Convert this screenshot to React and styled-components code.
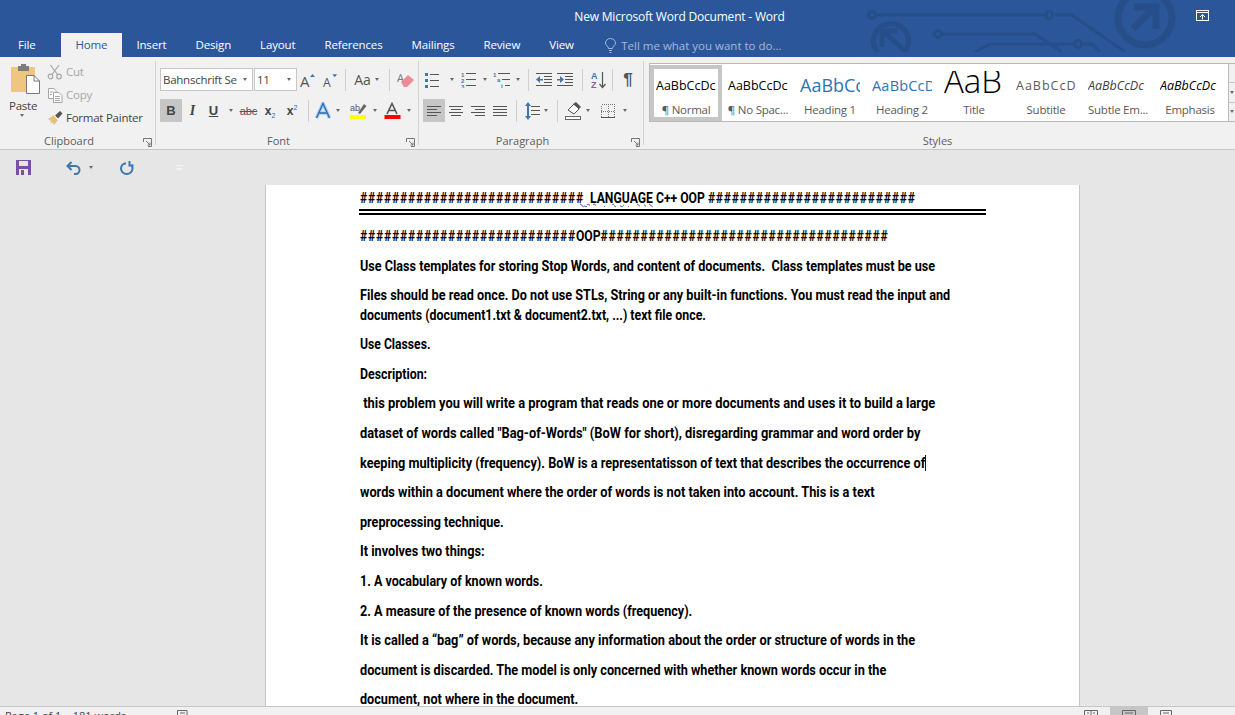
import React from "react";
import styled, { createGlobalStyle } from "styled-components";

const GlobalStyle = createGlobalStyle`
  html, body { margin: 0; padding: 0; height: 100%; overflow: hidden; }
  body { font-family: "Open Sans", "Liberation Sans", sans-serif; }
`;

const Window = styled.div`
  width: 1235px;
  height: 715px;
  display: flex;
  flex-direction: column;
  overflow: hidden;
  background: #e6e6e6;
`;

const Header = styled.header`
  position: relative;
  height: 57px;
  flex: none;
  background: #2b579a;
  overflow: hidden;
`;

const Circuit = styled.svg`
  position: absolute;
  left: 0;
  top: 0;
`;

const Title = styled.div`
  height: 33px;
  line-height: 33px;
  text-align: center;
  padding-left: 124px;
  font-size: 12px;
  letter-spacing: -0.2px;
  color: #fff;
  position: relative;
`;

const RestoreBtn = styled.svg`
  position: absolute;
  left: 1196px;
  top: 10px;
`;

const Tabs = styled.nav`
  display: flex;
  height: 24px;
  position: relative;
`;

const Tab = styled.div`
  padding: 0 14.5px;
  line-height: 24px;
  font-size: 11.5px;
  letter-spacing: -0.15px;
  color: ${(p) => (p.$active ? "#2b579a" : "#fff")};
  background: ${(p) => (p.$active ? "#f1f1f1" : "transparent")};
`;

const FileTab = styled(Tab)`
  padding: 0 25px 0 18px;
  width: 18px;
`;

const TellMe = styled.div`
  display: flex;
  align-items: center;
  gap: 5px;
  margin-left: 17px;
  font-size: 11.5px;
  color: #a5b9d6;
`;

const Ribbon = styled.section`
  height: 92px;
  flex: none;
  display: flex;
  background: #f1f1f1;
  border-bottom: 1px solid #c6c6c6;
`;

const Group = styled.div`
  position: relative;
  width: ${(p) => p.$w}px;
  flex: none;
  display: flex;
  flex-direction: column;
  box-sizing: border-box;
`;

const GroupBody = styled.div`
  height: 76px;
  display: flex;
  flex-direction: column;
  padding-left: ${(p) => p.$pl || 0}px;
`;

const GroupLabel = styled.div`
  height: 16px;
  line-height: 16px;
  padding-right: ${(p) => p.$pr ?? 17}px;
  text-align: center;
  font-size: 11px;
  color: #5c5c5c;
`;

const GroupRule = styled.div`
  width: 1px;
  flex: none;
  height: 84px;
  margin-top: 4px;
  background: #d2d2d2;
`;

const Launcher = styled.svg`
  position: absolute;
  right: ${(p) => p.$r || 3}px;
  bottom: 2px;
`;

const ClipRow = styled.div`
  display: flex;
`;

const PasteBtn = styled.div`
  width: 47px;
  padding: 7px 0 0 11px;
  box-sizing: border-box;
  display: flex;
  flex-direction: column;
  align-items: flex-start;
`;

const PasteLabel = styled.div`
  font-size: 11.5px;
  letter-spacing: -0.25px;
  line-height: 16px;
  margin: 4px 0 0 -2px;
  color: #444;
`;

const ClipList = styled.div`
  display: flex;
  flex-direction: column;
  padding-top: 3px;
`;

const ClipItem = styled.div`
  height: 23px;
  display: flex;
  align-items: center;
  gap: 3px;
  font-size: 11.5px;
  letter-spacing: -0.25px;
  white-space: nowrap;
  color: ${(p) => (p.$off ? "#a6a6a6" : "#444")};
`;

const ToolRow = styled.div`
  display: flex;
  align-items: center;
  height: ${(p) => p.$h || 23}px;
  margin-top: ${(p) => p.$mt || 0}px;
`;

const FontSelect = styled.div`
  width: ${(p) => p.$w}px;
  height: 23px;
  flex: none;
  box-sizing: border-box;
  background: #fff;
  border: 1px solid #c6c6c6;
  margin-right: 1px;
  padding: 0 5px 0 2px;
  display: flex;
  align-items: center;
  justify-content: space-between;
  font-size: 11.5px;
  letter-spacing: -0.25px;
  color: #444;
  white-space: nowrap;
`;

const Tool = styled.div`
  width: ${(p) => p.$w || 22}px;
  height: 23px;
  flex: none;
  display: flex;
  align-items: center;
  justify-content: center;
  gap: ${(p) => p.$gap || 0}px;
  font-size: ${(p) => p.$fs || 12}px;
  color: #555;
  margin-right: ${(p) => p.$mr || 0}px;
  background: ${(p) => (p.$on ? "#c6c6c6" : "transparent")};
`;

const BoldGlyph = styled.span`
  font-family: "Liberation Sans", sans-serif;
  font-weight: 700;
  font-size: 13px;
  color: #444;
`;

const ItalicGlyph = styled(BoldGlyph)`
  font-family: "Liberation Serif", serif;
  font-style: italic;
  font-size: 14px;
`;

const UnderGlyph = styled(BoldGlyph)`
  text-decoration: underline;
`;

const PilcrowGlyph = styled(BoldGlyph)`
  font-size: 17px;
  color: #555;
`;

const StrikeGlyph = styled.span`
  font-family: "Liberation Sans", sans-serif;
  font-size: 11px;
  color: #555;
  text-decoration: line-through;
`;

const ScriptGlyph = styled.span`
  font-family: "Liberation Sans", sans-serif;
  font-weight: 700;
  font-size: 12px;
  color: #444;
  sub, sup { font-size: 7px; color: #2b6cb0; font-weight: 400; line-height: 0; }
`;

const Sep = styled.div`
  width: 1px;
  height: 22px;
  flex: none;
  background: #cfcfcf;
  margin: 0 ${(p) => p.$m || 7}px;
`;

const Caret = styled.i`
  display: block;
  width: 0;
  height: 0;
  flex: none;
  border-left: 2.5px solid transparent;
  border-right: 2.5px solid transparent;
  border-top: 3px solid #6a6a6a;
  margin-left: ${(p) => p.$ml || 0}px;
  margin-right: ${(p) => p.$mr || 0}px;
`;

const Gallery = styled.div`
  margin: 6px 0 0 5px;
  width: 579px;
  height: 59px;
  box-sizing: border-box;
  background: #fff;
  border: 1px solid #b9b9b9;
  border-right: 0;
  padding-top: 1px;
  display: flex;
`;

const StyleCard = styled.div`
  width: 72px;
  height: 56px;
  flex: none;
  box-sizing: border-box;
  border: 4px solid ${(p) => (p.$on ? "#c6c6c6" : "transparent")};
  display: flex;
  flex-direction: column;
  align-items: center;
`;

const StylePreview = styled.div`
  height: 29px;
  width: 60px;
  margin-top: 2px;
  flex: none;
  overflow: hidden;
  white-space: nowrap;
  line-height: 29px;
  font-family: "Open Sans", sans-serif;
  font-size: ${(p) => p.$fs || 12.5}px;
  font-style: ${(p) => (p.$it ? "italic" : "normal")};
  letter-spacing: ${(p) => p.$ls || 0}px;
  color: ${(p) => p.$c || "#000"};
`;

const TitlePreview = styled(StylePreview)`
  font-weight: 300;
  line-height: 19px;
`;

const StyleName = styled.div`
  font-size: 11.5px;
  letter-spacing: -0.25px;
  line-height: 16px;
  margin-top: 2px;
  white-space: nowrap;
  color: #5a5a5a;
`;

const Spinner = styled.div`
  width: 7px;
  height: 59px;
  margin-top: 6px;
  flex: none;
  display: flex;
  flex-direction: column;
  border-top: 1px solid #b9b9b9;
  border-bottom: 1px solid #b9b9b9;
  box-sizing: border-box;
`;

const SpinCell = styled.div`
  flex: 1;
  border-left: 1px solid #b9b9b9;
  border-bottom: 1px solid #c6c6c6;
  display: flex;
  align-items: center;
  justify-content: center;
  &:last-child { border-bottom: 0; }
`;

const QuickBar = styled.div`
  height: 35px;
  flex: none;
  display: flex;
  align-items: center;
  padding: 0 0 0 16px;
  box-sizing: border-box;
  background: #e6e6e6;
`;

const QuickIcon = styled.span`
  display: flex;
  flex: none;
  margin-left: ${(p) => p.$ml || 0}px;
`;

const Workspace = styled.main`
  flex: 1;
  min-height: 0;
  display: flex;
  padding-left: 265px;
  overflow: hidden;
`;

const Page = styled.article`
  width: 815px;
  flex: none;
  box-sizing: border-box;
  background: #fff;
  border-left: 1px solid #c6c6c6;
  border-right: 1px solid #c6c6c6;
  padding: 3.5px 93px 0 94px;
  font-family: "Roboto", "Liberation Sans", sans-serif;
  font-weight: 700;
  font-size: 14px;
  color: #000;
`;

const Para = styled.p`
  margin: 0 0 ${(p) => p.$mb ?? 10.2}px;
  line-height: 19.4px;
  white-space: pre;
  transform-origin: left center;
  transform: scaleX(${(p) => p.$sx || 0.87});
  width: max-content;
`;

const HashRun = styled.span`
  letter-spacing: 0.9px;
`;

const Rule = styled.div`
  width: 627px;
  height: 6px;
  margin: -9.5px 0 12.4px -1px;
  box-sizing: border-box;
  border-top: 2px solid #000;
  border-bottom: 2px solid #000;
`;

const Misspelt = styled.span`
  text-decoration: underline wavy #4e4ea8 1px;
  text-underline-offset: 0;
`;

const Cursor = styled.span`
  display: inline-block;
  width: 1px;
  height: 16px;
  background: #000;
  vertical-align: -3px;
`;

const StatusBar = styled.footer`
  height: 9px;
  flex: none;
  box-sizing: border-box;
  display: flex;
  background: #f1f1f1;
  border-top: 1px solid #c6c6c6;
  overflow: hidden;
`;

const StatusText = styled.div`
  width: 177px;
  flex: none;
  box-sizing: border-box;
  padding: 1px 0 0 5px;
  font-size: 11px;
  line-height: 15px;
  color: #444;
  white-space: pre;
`;

const StatusIcon = styled.svg`
  flex: none;
  display: block;
  margin-top: 3px;
`;

const ViewGroup = styled.div`
  margin-left: auto;
  padding-right: 63px;
  display: flex;
`;

const ViewBtn = styled.div`
  width: ${(p) => p.$w}px;
  flex: none;
  margin-left: ${(p) => p.$ml || 0}px;
  padding-left: ${(p) => p.$pl || 0}px;
  box-sizing: border-box;
  background: ${(p) => (p.$on ? "#c6c6c6" : "transparent")};
`;

const lines = (color, rows) =>
  rows.map(([x1, y, x2], i) => <line key={i} x1={x1} y1={y} x2={x2} y2={y} stroke={color} />);

const Lines = ({ rows, w = 16, h = 16, color = "#555", children }) => (
  <svg width={w} height={h} viewBox={`0 0 ${w} ${h}`} shapeRendering="crispEdges">
    {lines(color, rows)}
    {children}
  </svg>
);

const DialogMark = ({ r }) => (
  <Launcher $r={r} width="9" height="9" viewBox="0 0 9 9" fill="none" stroke="#777">
    <path d="M.5 4V.5H8.5V8.5H5" />
    <path d="M3 3 7 7M7 4.5V7H4.5" />
  </Launcher>
);

const Circuitry = () => (
  <Circuit width="1235" height="52" viewBox="0 0 1235 52" fill="none" stroke="#264e89" strokeWidth="3">
    <circle cx="872" cy="15" r="3.5" />
    <path d="M876 15H1048M1055 15H1072L1125 52" />
    <circle cx="1049" cy="15" r="3.5" />
    <circle cx="938" cy="34" r="3.5" />
    <path d="M942 34H1035L1062 52" />
    <path d="M975 52 990 44H1075M1083 44H1092L1100 52" />
    <circle cx="1078" cy="44" r="3.5" />
    <circle cx="1145" cy="18" r="27" strokeWidth="7" />
    <path d="M1133 29 1152 10M1134 7H1156V29" strokeWidth="7" />
    <circle cx="891" cy="41" r="17.5" strokeWidth="5" />
    <path d="M904 50 885 33M882 47V31H898" strokeWidth="5" />
  </Circuit>
);

const PasteIcon = () => (
  <svg width="29" height="30" viewBox="0 0 29 30">
    <rect x="0" y="3" width="24" height="25" rx="1" fill="#efc67f" />
    <rect x="7" y="2" width="11" height="5" fill="#7c7c7c" />
    <rect x="10" y="0" width="5" height="3" fill="#7c7c7c" />
    <path d="M15.5 11.500H23L28.500 17V29.500H15.500Z" fill="#fff" stroke="#777" />
    <path d="M23 11.500V17H28.500" fill="none" stroke="#777" />
  </svg>
);

const ScissorsIcon = () => (
  <svg width="16" height="16" viewBox="0 0 16 16" fill="none" stroke="#a6a6a6" strokeWidth="1.200">
    <circle cx="3.500" cy="12.500" r="2.300" />
    <circle cx="12" cy="12.500" r="2.300" />
    <path d="M5 10.500 12 1M10.500 10.500 3.500 1" />
  </svg>
);

const CopyIcon = () => (
  <svg width="16" height="16" viewBox="0 0 16 16" fill="#fff" stroke="#a6a6a6">
    <path d="M1.500 1.500H7L9 3.500V11.500H1.500Z" />
    <path d="M6.500 5.500H12L15 8.500V15.500H6.500Z" />
    <path d="M3 5H6M3 7.500H5M8 9.500H13M8 11.500H13M8 13.500H13" fill="none" />
  </svg>
);

const PainterIcon = () => (
  <svg width="16" height="16" viewBox="0 0 16 16">
    <path d="M1 9 7 5 11 10 7 15 5 12 3 14 4 11Z" fill="#e9bf78" />
    <path d="M8 5.500 13 1 15.500 3.500 11 8.500Z" fill="#555" />
    <path d="M7 5 11 10" stroke="#fff" />
  </svg>
);

const GrowIcon = ({ small }) => (
  <svg width="18" height="18" viewBox="0 0 18 18">
    <text x="1" y="16" fontFamily="Open Sans" fontSize={small ? 13 : 15} fill="#555">A</text>
    <path d={small ? "M11 3H16L13.500 6Z" : "M11 6H16L13.500 3Z"} fill="#3e76ae" />
  </svg>
);

const EraserIcon = () => (
  <svg width="18" height="18" viewBox="0 0 18 18">
    <text x="0" y="11" fontFamily="Open Sans" fontSize="11" fill="#777">A</text>
    <path d="M4 11 11 4 17 9 10 16H7Z" fill="#ef8a96" />
  </svg>
);

const EffectIcon = () => (
  <svg width="16" height="18" viewBox="0 0 16 18">
    <path d="M1.500 16 8 1.500 14.500 16M4.500 11H11.500" fill="none" stroke="#a8c8e8" strokeWidth="3.500" />
    <path d="M1.500 16 8 1.500 14.500 16M4.500 11H11.500" fill="none" stroke="#2c6bb0" strokeWidth="1.300" />
  </svg>
);

const HighlightIcon = () => (
  <svg width="17" height="18" viewBox="0 0 17 18">
    <text x="0" y="9" fontFamily="Liberation Sans" fontSize="9" fill="#555">ab</text>
    <path d="M8 11 14 2 16.500 4 10 12Z" fill="#666" />
    <rect x="0" y="13" width="16" height="4" fill="#ffff00" />
  </svg>
);

const ColorIcon = () => (
  <svg width="17" height="18" viewBox="0 0 17 18">
    <path d="M3 12 8 1.500 13 12M5 8.500H11" fill="none" stroke="#555" strokeWidth="1.600" />
    <rect x="0.500" y="13" width="16" height="4" fill="#f00" />
  </svg>
);

const BulletIcon = () => (
  <svg width="15" height="16" viewBox="0 0 15 16" shapeRendering="crispEdges">
    <rect x="0" y="1" width="3" height="3" fill="#3e76ae" />
    <rect x="0" y="7" width="3" height="3" fill="#3e76ae" />
    <rect x="0" y="13" width="3" height="3" fill="#3e76ae" />
    {lines("#555", [[5, 2.500, 14], [5, 8.500, 14], [5, 14.500, 14]])}
  </svg>
);

const NumberIcon = () => (
  <svg width="15" height="17" viewBox="0 0 15 17">
    {["1", "2", "3"].map((n, i) => (
      <text key={n} x="0" y={5.500 + i * 6} fontFamily="Liberation Sans" fontWeight="700" fontSize="6" fill="#3e76ae">{n}</text>
    ))}
    {lines("#555", [[5, 2.500, 15], [5, 8.500, 15], [5, 14.500, 15]])}
  </svg>
);

const MultiIcon = () => (
  <svg width="17" height="17" viewBox="0 0 17 17">
    <text x="0" y="5.500" fontFamily="Liberation Sans" fontWeight="700" fontSize="6" fill="#3e76ae">1</text>
    <text x="4" y="11" fontFamily="Liberation Sans" fontWeight="700" fontSize="6" fill="#3e76ae">a</text>
    <text x="8" y="16.500" fontFamily="Liberation Sans" fontWeight="700" fontSize="6" fill="#3e76ae">i</text>
    {lines("#555", [[5, 2.500, 17], [9, 8.500, 17], [12, 14.500, 17]])}
  </svg>
);

const IndentIcon = ({ flip }) => (
  <svg width="16" height="14" viewBox="0 0 16 14" shapeRendering="crispEdges">
    {lines("#555", [[0, .5, 16], [8, 3.500, 16], [8, 6.500, 16], [8, 9.500, 16], [0, 12.500, 16]])}
    <path d={flip ? "M0 6H3V3L7 6.500 3 10V7.500H0Z" : "M7 6H4V3L0 6.500 4 10V7.500H7Z"} fill="#3e76ae" shapeRendering="auto" />
  </svg>
);

const SortIcon = () => (
  <svg width="15" height="18" viewBox="0 0 15 18">
    <text x="0" y="8" fontFamily="Liberation Sans" fontSize="9" fontWeight="700" fill="#3e76ae">A</text>
    <text x="0" y="17" fontFamily="Liberation Sans" fontSize="9" fontWeight="700" fill="#8a5ca8">Z</text>
    <path d="M11.500 1V16M8.500 13 11.500 16.500 14.500 13" fill="none" stroke="#555" strokeWidth="1.200" />
  </svg>
);

const LineSpacingIcon = () => (
  <svg width="15" height="18" viewBox="0 0 15 18" shapeRendering="crispEdges">
    {lines("#555", [[6, 4.500, 15], [6, 8.500, 15], [6, 12.500, 15]])}
    <path d="M3 0 6 4H4V14H6L3 18 0 14H2V4H0Z" fill="#3e76ae" shapeRendering="auto" />
  </svg>
);

const ShadingIcon = () => (
  <svg width="18" height="18" viewBox="0 0 18 18">
    <path d="M3 8 9 2 14 7 9 12Z" fill="#fff" stroke="#555" />
    <path d="M8 2 11 0 16 5 14 7Z" fill="#555" />
    <rect x=".5" y="14.500" width="15" height="3" fill="#fff" stroke="#666" />
  </svg>
);

const BorderIcon = () => (
  <svg width="14" height="14" viewBox="0 0 14 14" fill="none" stroke="#777" strokeDasharray="1 1" shapeRendering="crispEdges">
    <rect x=".5" y=".5" width="13" height="13" />
    <path d="M7 0V14M0 7H14" />
    <path d="M0 13.500H14" stroke="#555" strokeDasharray="none" />
  </svg>
);

const SaveIcon = () => (
  <svg width="15" height="15" viewBox="0 0 15 15" shapeRendering="crispEdges">
    <rect width="15" height="15" fill="#7a4fa3" />
    <rect x="3" y="1" width="9" height="5" fill="#e6e6e6" />
    <rect x="3" y="9" width="9" height="6" fill="#e6e6e6" />
    <rect x="5" y="10" width="3" height="5" fill="#7a4fa3" />
  </svg>
);

const UndoIcon = () => (
  <svg width="15" height="14" viewBox="0 0 15 14" fill="none" stroke="#3e76ae" strokeWidth="2">
    <path d="M5.500 1 1.500 5 5.500 9" />
    <path d="M2 5H9.500C12 5 13.500 7 13.500 9S12 13 9.500 13H8" />
  </svg>
);

const RedoIcon = () => (
  <svg width="14" height="14" viewBox="0 0 14 14" fill="none" stroke="#3e76ae" strokeWidth="2">
    <path d="M6 2.200C3 2.500 1 4.800 1 7.500 1 10.500 3.500 13 6.800 13 10 13 12.500 10.500 12.500 7.500 12.500 6 12 5 11.500 4" />
    <path d="M9.500 0V4.500H13.500" />
  </svg>
);

const CustomizeIcon = () => (
  <svg width="7" height="6" viewBox="0 0 7 6" fill="#f4f4f4">
    <rect width="7" height="1" />
    <path d="M0 3H7L3.500 6Z" />
  </svg>
);

const styleCards = [
  { name: "¶ Normal", on: true },
  { name: "¶ No Spac..." },
  { name: "Heading 1", fs: 18, c: "#2e74b5" },
  { name: "Heading 2", fs: 14.5, c: "#2e74b5", ls: 0.2 },
  { name: "Title", title: true },
  { name: "Subtitle", c: "#5a5a5a", ls: 1 },
  { name: "Subtle Em...", it: true, c: "#404040" },
  { name: "Emphasis", it: true },
];

const pageLines = [
  { text: " this problem you will write a program that reads one or more documents and uses it to build a large", sx: 0.921 },
  { text: 'dataset of words called "Bag-of-Words" (BoW for short), disregarding grammar and word order by', sx: 0.917 },
  { text: "keeping multiplicity (frequency). BoW is a representatisson of text that describes the occurrence of", sx: 0.907, caret: true },
  { text: "words within a document where the order of words is not taken into account. This is a text", sx: 0.913 },
  { text: "preprocessing technique.", sx: 0.9 },
  { text: "It involves two things:", sx: 0.907 },
  { text: "1. A vocabulary of known words.", sx: 0.895 },
  { text: "2. A measure of the presence of known words (frequency).", sx: 0.903 },
  { text: "It is called a “bag” of words, because any information about the order or structure of words in the", sx: 0.913 },
  { text: "document is discarded. The model is only concerned with whether known words occur in the", sx: 0.908 },
  { text: "document, not where in the document.", sx: 0.903 },
];

export default function App() {
  return (
    <>
      <GlobalStyle />
      <Window>
        <Header>
          <Circuitry />
          <Title>New Microsoft Word Document - Word</Title>
          <RestoreBtn width="13" height="11" viewBox="0 0 13 11" fill="none" stroke="#fff">
            <rect x=".5" y=".5" width="12" height="10" />
            <path d="M0 2.500H13" />
            <path d="M6.500 9.500V5M4 7 6.500 4.500 9 7" />
          </RestoreBtn>
          <Tabs>
            <FileTab>File</FileTab>
            <Tab $active>Home</Tab>
            {["Insert", "Design", "Layout", "References", "Mailings", "Review", "View"].map((t) => (
              <Tab key={t}>{t}</Tab>
            ))}
            <TellMe>
              <svg width="11" height="15" viewBox="0 0 11 15" fill="none" stroke="#a5b9d6">
                <path d="M3.500 10.500C3.500 8 .5 7.500 .5 5A5 4.500 0 0 1 10.500 5C10.500 7.500 7.500 8 7.500 10.500Z" />
                <path d="M4 12.500H7M4.500 14.500H6.500" />
              </svg>
              Tell me what you want to do...
            </TellMe>
          </Tabs>
        </Header>

        <Ribbon>
          <Group $w={155}>
            <GroupBody>
              <ClipRow>
                <PasteBtn>
                  <PasteIcon />
                  <PasteLabel>Paste</PasteLabel>
                  <Caret $ml={9} />
                </PasteBtn>
                <ClipList>
                  <ClipItem $off><ScissorsIcon />Cut</ClipItem>
                  <ClipItem $off><CopyIcon />Copy</ClipItem>
                  <ClipItem><PainterIcon />Format Painter</ClipItem>
                </ClipList>
              </ClipRow>
            </GroupBody>
            <GroupLabel>Clipboard</GroupLabel>
            <DialogMark />
          </Group>
          <GroupRule />
          <Group $w={262}>
            <GroupBody $pl={4}>
              <ToolRow $mt={11}>
                <FontSelect $w={93}>Bahnschrift Se<Caret /></FontSelect>
                <FontSelect $w={43}>11<Caret /></FontSelect>
                <Tool $w={19} $mr={5}><GrowIcon /></Tool>
                <Tool $w={17}><GrowIcon small /></Tool>
                <Sep $m={6} />
                <Tool $w={29} $mr={2} $fs={14} $gap={4}>Aa<Caret /></Tool>
                <Sep $m={6} />
                <Tool $w={20}><EraserIcon /></Tool>
              </ToolRow>
              <ToolRow $mt={8}>
                <Tool $on><BoldGlyph>B</BoldGlyph></Tool>
                <Tool $w={21}><ItalicGlyph>I</ItalicGlyph></Tool>
                <Tool $w={21}><UnderGlyph>U</UnderGlyph></Tool>
                <Tool $w={14}><Caret /></Tool>
                <Tool $w={21}><StrikeGlyph>abc</StrikeGlyph></Tool>
                <Tool $w={22}><ScriptGlyph>x<sub>2</sub></ScriptGlyph></Tool>
                <Tool $w={22}><ScriptGlyph>x<sup>2</sup></ScriptGlyph></Tool>
                <Sep $m={5} />
                <Tool $w={27} $gap={5} $mr={8}><EffectIcon /><Caret /></Tool>
                <Tool $w={28} $gap={6} $mr={6}><HighlightIcon /><Caret /></Tool>
                <Tool $w={28} $gap={6}><ColorIcon /><Caret /></Tool>
              </ToolRow>
            </GroupBody>
            <GroupLabel>Font</GroupLabel>
            <DialogMark />
          </Group>
          <GroupRule />
          <Group $w={224}>
            <GroupBody $pl={4}>
              <ToolRow $mt={11}>
                <Tool $w={19} $mr={3}><BulletIcon /></Tool>
                <Tool $w={13}><Caret /></Tool>
                <Tool $w={20}><NumberIcon /></Tool>
                <Tool $w={13}><Caret /></Tool>
                <Tool $w={21}><MultiIcon /></Tool>
                <Tool $w={11}><Caret /></Tool>
                <Sep $m={5} />
                <Tool $w={20}><IndentIcon /></Tool>
                <Tool $w={22}><IndentIcon flip /></Tool>
                <Sep $m={6} />
                <Tool $w={18}><SortIcon /></Tool>
                <Sep $m={5} />
                <Tool $w={20}><PilcrowGlyph>¶</PilcrowGlyph></Tool>
              </ToolRow>
              <ToolRow $mt={8}>
                <Tool $on><Lines rows={[[1, 3.500, 15], [1, 6.500, 11], [1, 9.500, 15], [1, 12.500, 11]]} /></Tool>
                <Tool><Lines rows={[[1, 3.500, 15], [3, 6.500, 13], [1, 9.500, 15], [3, 12.500, 13]]} /></Tool>
                <Tool><Lines rows={[[1, 3.500, 15], [5, 6.500, 15], [1, 9.500, 15], [5, 12.500, 15]]} /></Tool>
                <Tool><Lines rows={[[1, 3.500, 15], [1, 6.500, 15], [1, 9.500, 15], [1, 12.500, 15]]} /></Tool>
                <Sep $m={5} />
                <Tool $w={28} $gap={4} $mr={2}><LineSpacingIcon /><Caret /></Tool>
                <Sep $m={5} />
                <Tool $w={29} $gap={3} $mr={6}><ShadingIcon /><Caret /></Tool>
                <Tool $w={32} $gap={8}><BorderIcon /><Caret /></Tool>
              </ToolRow>
            </GroupBody>
            <GroupLabel>Paragraph</GroupLabel>
            <DialogMark />
          </Group>
          <GroupRule />
          <Group $w={591}>
            <GroupBody>
              <ClipRow>
                <Gallery>
                  {styleCards.map((s) => (
                    <StyleCard key={s.name} $on={s.on}>
                      {s.title ? (
                        <TitlePreview $fs={33}>AaB</TitlePreview>
                      ) : (
                        <StylePreview $fs={s.fs} $c={s.c} $ls={s.ls} $it={s.it}>AaBbCcDc</StylePreview>
                      )}
                      <StyleName>{s.name}</StyleName>
                    </StyleCard>
                  ))}
                </Gallery>
                <Spinner>
                  <SpinCell />
                  <SpinCell><Caret /></SpinCell>
                  <SpinCell><Caret /></SpinCell>
                </Spinner>
              </ClipRow>
            </GroupBody>
            <GroupLabel $pr={4}>Styles</GroupLabel>
          </Group>
        </Ribbon>

        <QuickBar>
          <SaveIcon />
          <QuickIcon $ml={35}><UndoIcon /></QuickIcon>
          <Caret $ml={8} />
          <QuickIcon $ml={27}><RedoIcon /></QuickIcon>
          <QuickIcon $ml={42}><CustomizeIcon /></QuickIcon>
        </QuickBar>

        <Workspace>
          <Page>
            <Para>
              <HashRun>{"#".repeat(27)}</HashRun>
              <Misspelt><HashRun>#</HashRun>{"  LANGUAGE"}</Misspelt>
              {" C++ OOP "}
              <HashRun>{"#".repeat(26)}</HashRun>
            </Para>
            <Rule />
            <Para><HashRun>{"#".repeat(27)}</HashRun>OOP<HashRun>{"#".repeat(36)}</HashRun></Para>
            <Para $sx={0.901}>Use Class templates for storing Stop Words, and content of documents.  Class templates must be use</Para>
            <Para $sx={0.904} $mb={0}>Files should be read once. Do not use STLs, String or any built-in functions. You must read the input and</Para>
            <Para $sx={0.883}>documents (document1.txt &amp; document2.txt, ...) text file once.</Para>
            <Para>Use Classes.</Para>
            <Para $sx={0.883}>Description:</Para>
            {pageLines.map((l) => (
              <Para key={l.text} $sx={l.sx}>{l.text}{l.caret && <Cursor />}</Para>
            ))}
          </Page>
        </Workspace>

        <StatusBar>
          <StatusText>{"Page 1 of 1    181 words"}</StatusText>
          <StatusIcon width="14" height="5" viewBox="0 0 14 5" fill="none" stroke="#666"><path d="M.5 5V.5H10V5M3 3H8" /></StatusIcon>
          <ViewGroup>
            <ViewBtn $w={14}>
              <StatusIcon width="14" height="5" viewBox="0 0 14 5" fill="none" stroke="#666"><path d="M.5 5V.5H13.500V5M7 0V5M3 3H5M9 3H11" /></StatusIcon>
            </ViewBtn>
            <ViewBtn $ml={12} $w={38} $pl={12} $on>
              <StatusIcon width="14" height="5" viewBox="0 0 14 5" fill="none" stroke="#666"><path d="M.5 5V.5H13.500V5M3 3H11" /></StatusIcon>
            </ViewBtn>
            <ViewBtn $ml={12} $w={12}>
              <StatusIcon width="12" height="5" viewBox="0 0 12 5" fill="none" stroke="#666"><path d="M.5 5V.5H11.500V5M3 3H9" /></StatusIcon>
            </ViewBtn>
          </ViewGroup>
        </StatusBar>
      </Window>
    </>
  );
}
